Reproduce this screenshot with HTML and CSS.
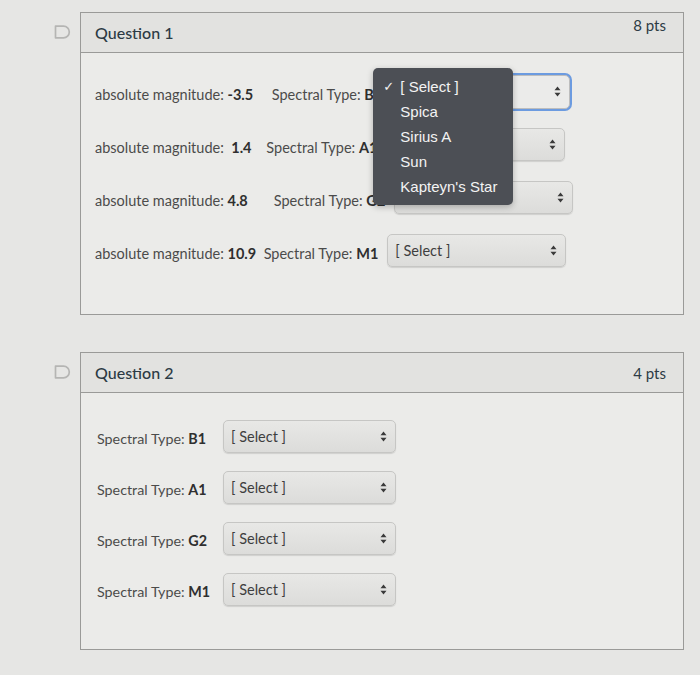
FILE: index.html
```html
<!DOCTYPE html>
<html>
<head>
<meta charset="utf-8">
<link rel="stylesheet" href="styles.css">
</head>
<body>
<div class="page">
  <div class="qwrap q1">
    <div class="flag"><svg width="17" height="14" viewBox="0 0 17 14"><path d="M1.5 1.2 H9.5 A5.8 5.8 0 0 1 9.5 12.8 H1.5 Z" fill="none" stroke="#b5b5b3" stroke-width="1.7" stroke-linejoin="round"/></svg></div>
    <div class="card">
      <div class="card-head"><span class="qname">Question 1</span><span class="pts">8 pts</span></div>
      <div class="card-body q1-body">
        <div class="row">
          <span class="lbl">absolute magnitude: <b>-3.5</b>     Spectral Type: <b>B1</b></span>
          <div class="sel wide focus">
            <span class="sel-text"></span>
            <svg class="arr" width="7" height="11" viewBox="0 0 7 11"><path d="M3.5 0.5 L6.5 4.3 H0.5 Z M3.5 10.5 L6.5 6.7 H0.5 Z" fill="#3a3a3a"/></svg>
            <div class="menu">
              <div class="item"><span class="check">✓</span>[ Select ]</div>
              <div class="item">Spica</div>
              <div class="item">Sirius A</div>
              <div class="item">Sun</div>
              <div class="item">Kapteyn's Star</div>
            </div>
          </div>
        </div>
        <div class="row">
          <span class="lbl">absolute magnitude:  <b>1.4</b>    Spectral Type: <b>A1</b></span>
          <div class="sel wide"><span class="sel-text"></span><svg class="arr" width="7" height="11" viewBox="0 0 7 11"><path d="M3.5 0.5 L6.5 4.3 H0.5 Z M3.5 10.5 L6.5 6.7 H0.5 Z" fill="#3a3a3a"/></svg></div>
        </div>
        <div class="row">
          <span class="lbl">absolute magnitude: <b>4.8</b>       Spectral Type: <b>G2</b></span>
          <div class="sel wide"><span class="sel-text"></span><svg class="arr" width="7" height="11" viewBox="0 0 7 11"><path d="M3.5 0.5 L6.5 4.3 H0.5 Z M3.5 10.5 L6.5 6.7 H0.5 Z" fill="#3a3a3a"/></svg></div>
        </div>
        <div class="row">
          <span class="lbl">absolute magnitude: <b>10.9</b>  Spectral Type: <b>M1</b></span>
          <div class="sel wide"><span class="sel-text">[ Select ]</span><svg class="arr" width="7" height="11" viewBox="0 0 7 11"><path d="M3.5 0.5 L6.5 4.3 H0.5 Z M3.5 10.5 L6.5 6.7 H0.5 Z" fill="#3a3a3a"/></svg></div>
        </div>
      </div>
    </div>
  </div>

  <div class="qwrap q2">
    <div class="flag"><svg width="17" height="14" viewBox="0 0 17 14"><path d="M1.5 1.2 H9.5 A5.8 5.8 0 0 1 9.5 12.8 H1.5 Z" fill="none" stroke="#b5b5b3" stroke-width="1.7" stroke-linejoin="round"/></svg></div>
    <div class="card">
      <div class="card-head"><span class="qname">Question 2</span><span class="pts">4 pts</span></div>
      <div class="card-body q2-body">
        <div class="row2">
          <span class="lbl2">Spectral Type: <b>B1</b></span>
          <div class="sel narrow"><span class="sel-text">[ Select ]</span><svg class="arr" width="7" height="11" viewBox="0 0 7 11"><path d="M3.5 0.5 L6.5 4.3 H0.5 Z M3.5 10.5 L6.5 6.7 H0.5 Z" fill="#3a3a3a"/></svg></div>
        </div>
        <div class="row2">
          <span class="lbl2">Spectral Type: <b>A1</b></span>
          <div class="sel narrow"><span class="sel-text">[ Select ]</span><svg class="arr" width="7" height="11" viewBox="0 0 7 11"><path d="M3.5 0.5 L6.5 4.3 H0.5 Z M3.5 10.5 L6.5 6.7 H0.5 Z" fill="#3a3a3a"/></svg></div>
        </div>
        <div class="row2">
          <span class="lbl2">Spectral Type: <b>G2</b></span>
          <div class="sel narrow"><span class="sel-text">[ Select ]</span><svg class="arr" width="7" height="11" viewBox="0 0 7 11"><path d="M3.5 0.5 L6.5 4.3 H0.5 Z M3.5 10.5 L6.5 6.7 H0.5 Z" fill="#3a3a3a"/></svg></div>
        </div>
        <div class="row2">
          <span class="lbl2">Spectral Type: <b>M1</b></span>
          <div class="sel narrow"><span class="sel-text">[ Select ]</span><svg class="arr" width="7" height="11" viewBox="0 0 7 11"><path d="M3.5 0.5 L6.5 4.3 H0.5 Z M3.5 10.5 L6.5 6.7 H0.5 Z" fill="#3a3a3a"/></svg></div>
        </div>
      </div>
    </div>
  </div>
</div>
</body>
</html>
```

FILE: styles.css
```css
html, body {
  margin: 0;
  padding: 0;
  background: #e6e6e4;
  font-family: Lato, "Open Sans", sans-serif;
  color: #4a4a4a;
}
.page {
  width: 700px;
  height: 675px;
  padding-top: 12px;
  box-sizing: border-box;
  overflow: hidden;
}
.qwrap {
  display: flex;
  align-items: flex-start;
  padding-left: 54px;
}
.q2 { margin-top: 37px; }
.flag {
  width: 26px;
  height: 40px;
  display: flex;
  align-items: center;
}
.card {
  width: 602px;
  border: 1.5px solid #9a9a98;
  background: #ebebe9;
}
.card-head {
  height: 39px;
  display: flex;
  align-items: center;
  justify-content: space-between;
  padding: 0 17px 0 14px;
  background: #e2e2e0;
  border-bottom: 1.5px solid #9a9a98;
}
.qname {
  font-size: 16px;
  color: #2d3b45;
  font-weight: 500;
}
.pts {
  font-size: 15px;
  color: #2d3b45;
}
.q1 .pts { position: relative; top: -8px; }
.card-body {
  display: flex;
  flex-direction: column;
}
.q1-body {
  padding: 22px 0 47px 14px;
  gap: 20px;
}
.q2-body {
  padding: 27px 0 43px 16px;
  gap: 18px;
}
.row, .row2 {
  display: flex;
  align-items: center;
  height: 33px;
}
.lbl {
  white-space: pre;
  font-size: 14.5px;
  color: #4b4b4b;
  padding-top: 5px;
}
.lbl2 {
  width: 126px;
  font-size: 14.3px;
  color: #4b4b4b;
  padding-top: 3px;
}
b { color: #2f2f2f; font-weight: 700; }
.sel {
  position: relative;
  height: 33px;
  box-sizing: border-box;
  border: 1px solid #c6c6c4;
  border-radius: 5px;
  background: linear-gradient(#e8e8e6, #dcdcda);
  box-shadow: 0 1px 1px rgba(0,0,0,0.12);
  display: flex;
  align-items: center;
  justify-content: space-between;
  padding: 0 8px 0 7px;
}
.wide { width: 179px; margin-left: 9px; }
.narrow { width: 173px; }
.sel.focus {
  background: #ebebea;
  border: 1px solid #bdbdbd;
  box-shadow: 0 0 0 2px #6c9be0;
  height: 34px;
}
.sel-text {
  font-size: 14.5px;
  color: #3e3e3e;
}
.menu {
  position: absolute;
  left: -19px;
  top: -8px;
  width: 140px;
  box-sizing: border-box;
  padding: 6px 0;
  background: #4c4f55;
  border-radius: 5px;
  box-shadow: 0 2px 6px rgba(0,0,0,0.25);
  z-index: 5;
}
.item {
  position: relative;
  height: 25px;
  line-height: 25px;
  padding-left: 27px;
  font-family: "Liberation Sans", Arial, sans-serif;
  font-size: 15px;
  color: #f3f3f3;
}
.check {
  position: absolute;
  left: 10px;
  top: 0;
  font-family: "DejaVu Sans", sans-serif;
  font-size: 13px;
}
```
